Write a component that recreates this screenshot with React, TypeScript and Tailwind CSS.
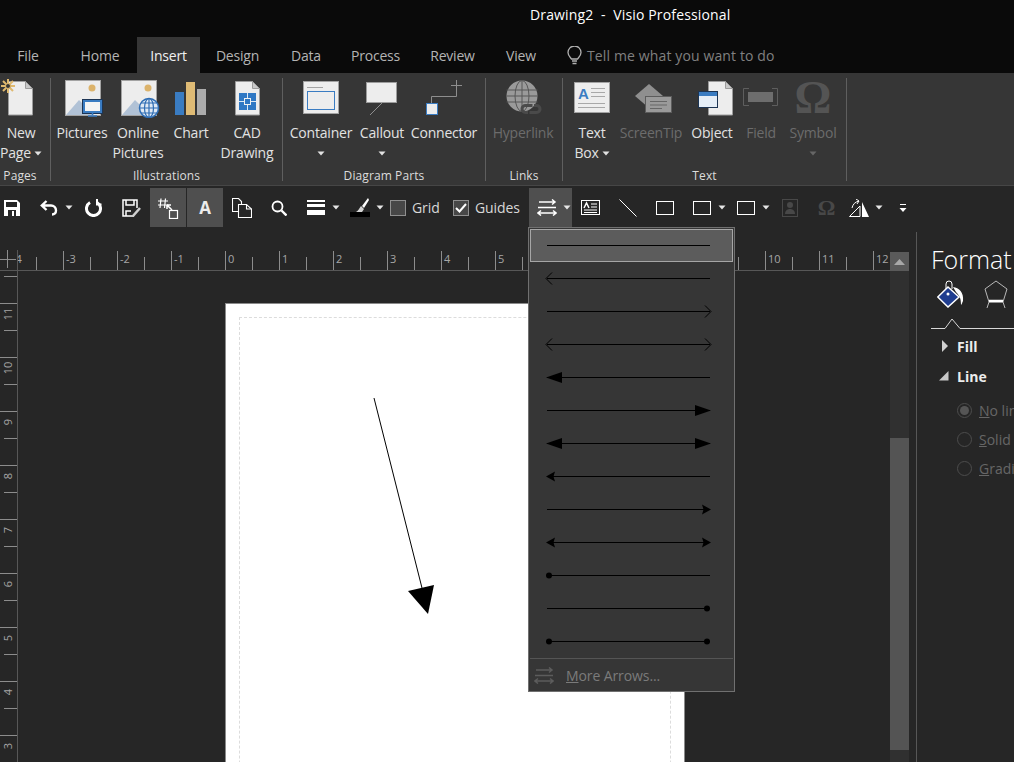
import type { ReactNode } from 'react';

const FONT = "font-['Open_Sans','Noto_Sans',sans-serif]";

function Caret({ color = '#e6e6e6', className = '' }: { color?: string; className?: string }) {
  return (
    <svg width="8" height="5" viewBox="0 0 8 5" className={`shrink-0 ${className}`}>
      <path d="M0.5 0.5h7L4 4.5z" fill={color} />
    </svg>
  );
}

function Frame({ children }: { children: ReactNode }) {
  return (
    <svg width="44" height="40" viewBox="0 0 44 40" className="block">
      {children}
    </svg>
  );
}

function Doc({ x, y = 3 }: { x: number; y?: number }) {
  return (
    <g>
      <path d={`M${x + 0.5} ${y + 0.5}h17l7 7v26.500h-24z`} fill="#ededed" stroke="#9c9c9c" />
      <path d={`M${x + 17.500} ${y + 0.5}v7h7z`} fill="#c9c9c9" stroke="#9c9c9c" />
    </g>
  );
}

function Landscape() {
  return (
    <g>
      <rect x="5.500" y="2.500" width="35" height="35" fill="#ededed" stroke="#a3a3a3" />
      <circle cx="32" cy="10" r="3.500" fill="#dcb36b" />
      <path d="M6 37l13-15 15 15z" fill="#b1c2d6" />
    </g>
  );
}

function NewPageIcon() {
  return (
    <Frame>
      <Doc x={9} />
      <g stroke="#dfb96f" strokeWidth="2">
        <path d="M2 8h14M9 1v14M4 3l10 10M14 3L4 13" />
      </g>
      <circle cx="9" cy="8" r="2.500" fill="#363636" stroke="#dfb96f" />
    </Frame>
  );
}

function PicturesIcon() {
  return (
    <Frame>
      <Landscape />
      <rect x="22" y="21" width="21" height="15" fill="#1d3554" />
      <rect x="23" y="22" width="19" height="13" fill="#3a7cc2" />
      <rect x="25" y="24" width="15" height="9" fill="#f4f4f4" />
      <path d="M32.500 35v2M28 38h9" stroke="#3a7cc2" strokeWidth="1.500" />
    </Frame>
  );
}

function OnlinePicturesIcon() {
  return (
    <Frame>
      <Landscape />
      <circle cx="33" cy="30" r="9.500" fill="#dfe9f4" stroke="#2e6db4" strokeWidth="1.500" />
      <path d="M24 30h18M25.500 25h15M25.500 35h15M33 20.500v19" stroke="#2e6db4" strokeWidth="1.200" />
      <ellipse cx="33" cy="30" rx="4.500" ry="9.500" fill="none" stroke="#2e6db4" strokeWidth="1.200" />
    </Frame>
  );
}

function ChartIcon() {
  return (
    <Frame>
      <rect x="6" y="14" width="9" height="23" fill="#3a7cc2" />
      <rect x="17" y="4" width="9" height="33" fill="#dfbb75" />
      <rect x="28" y="11" width="9" height="26" fill="#acacac" />
    </Frame>
  );
}

function CadIcon() {
  return (
    <Frame>
      <Doc x={10} />
      <rect x="14" y="15" width="17" height="17" fill="#2f78c4" />
      <path d="M22.500 15v17M14 23.500h17" stroke="#dce8f5" />
      <rect x="19.500" y="20.500" width="6" height="6" fill="#2f78c4" stroke="#f0f0f0" />
    </Frame>
  );
}

function ContainerIcon() {
  return (
    <Frame>
      <rect x="4.500" y="3.500" width="35" height="32" fill="#ededed" stroke="#a3a3a3" />
      <path d="M8 9.500h16" stroke="#a3a3a3" />
      <rect x="8.500" y="13.500" width="27" height="18" fill="none" stroke="#3a7cc2" />
    </Frame>
  );
}

function CalloutIcon() {
  return (
    <Frame>
      <rect x="6.500" y="4.500" width="30" height="20" fill="#ededed" stroke="#9c9c9c" />
      <path d="M22 25L10 37" stroke="#8e8e8e" />
    </Frame>
  );
}

function ConnectorIcon() {
  return (
    <svg width="44" height="40" viewBox="0 0 44 40" className="block">
      <path d="M9.500 25v-6.500h25v-11" stroke="#8e8e8e" fill="none" />
      <path d="M29 7.500h11M34.500 2v11" stroke="#8e8e8e" fill="none" />
      <rect x="4.500" y="25.500" width="11" height="11" fill="#ededed" stroke="#3a7cc2" />
    </svg>
  );
}

function HyperlinkIcon() {
  return (
    <Frame>
      <circle cx="21" cy="18" r="15.500" fill="#9a9a9a" />
      <path d="M5.500 12h31M5.500 24h31M5.500 18h31M21 2.500v31" stroke="#565656" />
      <ellipse cx="21" cy="18" rx="7" ry="15.500" fill="none" stroke="#565656" />
      <path d="M27 34.500h-2.500a3 3 0 0 1 0-7h7M33 27.500h2.500a3 3 0 0 1 0 7h-7" fill="none" stroke="#4a4a4a" strokeWidth="3" />
    </Frame>
  );
}

function TextBoxIcon() {
  return (
    <Frame>
      <rect x="4.500" y="4.500" width="35" height="30" fill="#ededed" stroke="#a3a3a3" />
      <text x="8" y="21" fontSize="15" fontWeight="700" fill="#3a7cc2" fontFamily="'Liberation Sans',sans-serif">A</text>
      <path d="M21 10.500h14M21 14.500h14M21 18.500h14M8 25.500h27M8 29.500h27" stroke="#a8a8a8" />
    </Frame>
  );
}

function ScreenTipIcon() {
  return (
    <Frame>
      <path d="M20 6l14 12-14 12L6 18z" fill="#8f8f8f" />
      <rect x="16.500" y="18.500" width="26" height="16" fill="#9a9a9a" stroke="#5c5c5c" />
      <path d="M21 23.500h17M21 27h17M21 30.500h12" stroke="#666666" />
    </Frame>
  );
}

function ObjectIcon() {
  return (
    <Frame>
      <Doc x={18} />
      <rect x="8.500" y="13.500" width="19" height="16" fill="#e6eef7" stroke="#1d3554" />
      <rect x="9" y="14" width="18" height="4" fill="#3a7cc2" />
    </Frame>
  );
}

function FieldIcon() {
  return (
    <Frame>
      <path d="M10 10.500h-5.500v17H10M33 10.500h5.500v17H33" fill="none" stroke="#5e5e5e" />
      <rect x="9" y="14" width="25" height="10" fill="#6d6d6d" />
    </Frame>
  );
}

function Omega({ size, color }: { size: number; color: string }) {
  return (
    <span
      className="font-['Liberation_Serif',serif] font-bold leading-none"
      style={{ fontSize: size, color }}
    >
      Ω
    </span>
  );
}

type RibbonItem = {
  width: string;
  icon: ReactNode;
  lines: string[];
  caret?: 'inline' | 'below';
  disabled?: boolean;
};

function RibbonButton({ item }: { item: RibbonItem }) {
  const color = item.disabled ? 'text-[#6c6c6c]' : 'text-[#e2e2e2]';
  const caretColor = item.disabled ? '#666666' : '#e2e2e2';
  return (
    <div className={`flex flex-col items-center ${item.width}`}>
      <div className="flex h-[40px] items-center justify-center">{item.icon}</div>
      <div className={`mt-[5px] flex flex-col items-center text-[14px] leading-[20px] tracking-[-0.2px] whitespace-nowrap ${color}`}>
        {item.lines.map((line, i) => (
          <div key={line} className="flex items-center gap-[3px]">
            {line}
            {item.caret === 'inline' && i === item.lines.length - 1 && <Caret color={caretColor} />}
          </div>
        ))}
        {item.caret === 'below' && (
          <div className="flex h-[20px] items-center">
            <Caret color={caretColor} />
          </div>
        )}
      </div>
    </div>
  );
}

function RibbonGroup({ width, pad, label, items, center }: {
  width: string;
  pad: string;
  label: string;
  items: RibbonItem[];
  center?: string;
}) {
  return (
    <div className={`flex h-full shrink-0 flex-col ${width}`}>
      <div className="mt-[5px] mb-[4px] flex flex-1 flex-col border-r border-[#5f5f5f]">
        <div className={`flex flex-1 ${pad}`}>
          {items.map((item) => (
            <RibbonButton key={item.lines.join(' ')} item={item} />
          ))}
        </div>
        <div className={`-mb-[3px] text-center text-[12px] leading-[16px] tracking-[0.1px] text-[#dcdcdc] ${center ?? ''}`}>
          {label}
        </div>
      </div>
    </div>
  );
}

function Ribbon() {
  return (
    <div className="flex h-[112px] bg-[#363636]">
      <RibbonGroup
        width="w-[51px]"
        pad="pl-0"
        label="Pages"
        center="pr-[10px]"
        items={[{ width: 'w-[42px]', icon: <NewPageIcon />, lines: ['New', 'Page'], caret: 'inline' }]}
      />
      <RibbonGroup
        width="w-[232px]"
        pad="pl-[3px]"
        label="Illustrations"
        items={[
          { width: 'w-[56px]', icon: <PicturesIcon />, lines: ['Pictures'] },
          { width: 'w-[56px]', icon: <OnlinePicturesIcon />, lines: ['Online', 'Pictures'] },
          { width: 'w-[50px]', icon: <ChartIcon />, lines: ['Chart'] },
          { width: 'w-[62px]', icon: <CadIcon />, lines: ['CAD', 'Drawing'] },
        ]}
      />
      <RibbonGroup
        width="w-[203px]"
        pad="pl-[5px]"
        label="Diagram Parts"
        items={[
          { width: 'w-[66px]', icon: <ContainerIcon />, lines: ['Container'], caret: 'below' },
          { width: 'w-[56px]', icon: <CalloutIcon />, lines: ['Callout'], caret: 'below' },
          { width: 'w-[68px]', icon: <ConnectorIcon />, lines: ['Connector'] },
        ]}
      />
      <RibbonGroup
        width="w-[77px]"
        pad="pl-[2px]"
        label="Links"
        items={[{ width: 'w-[70px]', icon: <HyperlinkIcon />, lines: ['Hyperlink'], disabled: true }]}
      />
      <RibbonGroup
        width="w-[284px]"
        pad="pl-[3px]"
        label="Text"
        items={[
          { width: 'w-[52px]', icon: <TextBoxIcon />, lines: ['Text', 'Box'], caret: 'inline' },
          { width: 'w-[66px]', icon: <ScreenTipIcon />, lines: ['ScreenTip'], disabled: true },
          { width: 'w-[56px]', icon: <ObjectIcon />, lines: ['Object'] },
          { width: 'w-[42px]', icon: <FieldIcon />, lines: ['Field'], disabled: true },
          { width: 'w-[62px]', icon: <Omega size={46} color="#545454" />, lines: ['Symbol'], caret: 'below', disabled: true },
        ]}
      />
    </div>
  );
}

function TitleBar() {
  const tabs = [
    { label: 'File', cls: 'w-[56px]' },
    { label: 'Home', cls: 'w-[81px] pl-[7px]' },
    { label: 'Insert', cls: 'w-[63px] bg-[#363636] text-[#f0f0f0]' },
    { label: 'Design', cls: 'w-[75px]' },
    { label: 'Data', cls: 'w-[62px]' },
    { label: 'Process', cls: 'w-[77px]' },
    { label: 'Review', cls: 'w-[77px]' },
    { label: 'View', cls: 'w-[60px]' },
  ];
  return (
    <div className="h-[73px] bg-[#0a0a0a]">
      <div className="h-[37px] pl-[530px] pt-[4px] text-[14px] leading-[22px] tracking-[0.15px] whitespace-pre text-white">
        Drawing2  -  Visio Professional
      </div>
      <div className="flex h-[36px] items-stretch text-[14px] tracking-[-0.2px] text-[#b4b4b4]">
        {tabs.map((tab) => (
          <div key={tab.label} className={`flex shrink-0 items-center justify-center ${tab.cls}`}>
            {tab.label}
          </div>
        ))}
        <div className="ml-[16px] flex items-center gap-[5px] tracking-[0.13px] text-[#808080]">
          <svg width="15" height="19" viewBox="0 0 15 19" fill="none" stroke="#b0b0b0" strokeWidth="1.300">
            <path d="M4.500 13C3 11 1 9.500 1 6.500a6.500 6.500 0 0 1 13 0C14 9.500 12 11 10.500 13z" />
            <path d="M5 15h5M5.500 17.500h4" strokeWidth="1.600" />
          </svg>
          <span className="whitespace-nowrap">Tell me what you want to do</span>
        </div>
      </div>
    </div>
  );
}

function SwapIcon({ color = 'white', width = 20, height = 17 }: { color?: string; width?: number; height?: number }) {
  return (
    <svg width={width} height={height} viewBox="0 0 20 17" fill="none" stroke={color} strokeWidth="1.500" className="shrink-0">
      <path d="M2 3h16M15 .5L18 3l-3 2.500M1 8.500h18M1 14h18M4 11.500L1 14l3 2.500M16 11.500l3 2.500-3 2.500" />
    </svg>
  );
}

function Toolbar() {
  return (
    <div className="h-[47px] border-t border-[#464646] bg-[#262626] pt-[2px] text-[14px] tracking-[-0.1px] text-[#d8d8d8]">
      <div className="flex h-[39px] w-full items-center">
        <svg width="16" height="16" viewBox="0 0 16 16" className="ml-[4px] shrink-0">
          <path d="M0 0h13l3 3v13H0z" fill="white" />
          <rect x="2" y="2" width="11" height="5" fill="#262626" />
          <rect x="4" y="10" width="8" height="6" fill="#262626" />
          <rect x="8" y="11" width="2" height="5" fill="white" />
        </svg>
        <svg width="18" height="16" viewBox="0 0 18 16" fill="none" stroke="white" strokeWidth="2.400" className="ml-[20px] shrink-0">
          <path d="M6.500 1L1.800 5.500l4.700 4.500M2 5.500h9a5 5 0 0 1 5 5c0 2.500-1.500 4-4 4" />
        </svg>
        <Caret className="ml-[7px]" />
        <svg width="17" height="18" viewBox="0 0 17 18" fill="none" stroke="white" strokeWidth="3" className="ml-[12px] shrink-0">
          <path d="M5 3.500A7 7 0 1 0 12 3.500" />
          <path d="M12 0v5.500h4.500" strokeWidth="2" />
        </svg>
        <svg width="19" height="18" viewBox="0 0 19 18" fill="none" stroke="white" strokeWidth="1.500" className="ml-[20px] shrink-0">
          <path d="M12 17H1V1h14v8" />
          <path d="M4 1v5h8V1" />
          <path d="M4 17v-5h5" />
          <path d="M11 17l7-8" strokeWidth="2.500" stroke="#cfcfcf" />
        </svg>
        <div className="ml-[9px] flex h-[39px] w-[36px] shrink-0 items-center justify-center bg-[#4f4f4f]">
          <svg width="21" height="22" viewBox="0 0 21 22" fill="none" stroke="white" strokeWidth="1.200">
            <path d="M3 1.500L2 11M7.500 1.500L6.500 11M0 4h10M0 8h10" />
            <path d="M9 8l5 5M9 8h4M9 8v4" strokeWidth="1.500" />
            <rect x="11.500" y="13.500" width="8" height="8" />
          </svg>
        </div>
        <div className="ml-[1px] flex h-[39px] w-[36px] shrink-0 items-center justify-center bg-[#4f4f4f] text-[17px] font-bold text-[#ececec]">
          A
        </div>
        <svg width="20" height="20" viewBox="0 0 20 20" fill="none" stroke="white" strokeWidth="1.100" className="ml-[9px] shrink-0">
          <path d="M6 13.500H.5V.5h6l3 3v3" />
          <path d="M6.500 6.500h8l5 4.500v8.500h-13z" />
          <path d="M14.500 6.500v4.500h5" />
        </svg>
        <svg width="16" height="16" viewBox="0 0 16 16" fill="none" stroke="white" strokeWidth="1.800" className="ml-[19px] shrink-0">
          <circle cx="6.500" cy="6.500" r="5" />
          <path d="M10.500 10.500L15.500 15.500" strokeWidth="2.400" />
        </svg>
        <svg width="18" height="16" viewBox="0 0 18 16" className="ml-[20px] shrink-0">
          <rect y="0" width="18" height="2" fill="white" />
          <rect y="4" width="18" height="3" fill="white" />
          <rect y="10" width="18" height="5" fill="white" />
        </svg>
        <Caret className="ml-[7px]" />
        <svg width="20" height="19" viewBox="0 0 20 19" className="ml-[10px] shrink-0">
          <path d="M18 0L12 8l2 2 5-8z" fill="white" />
          <path d="M11 8l3 3-2 3H6c2-1 3-3 5-6z" fill="#d4d4d4" />
          <rect y="14" width="20" height="5" fill="black" />
        </svg>
        <Caret className="ml-[6px]" />
        <div className="ml-[6px] h-[16px] w-[16px] shrink-0 border border-[#8f8f8f] bg-[#474747]" />
        <span className="ml-[6px] w-[28px] shrink-0">Grid</span>
        <div className="ml-[13px] flex h-[16px] w-[16px] shrink-0 items-center justify-center border border-[#8f8f8f] bg-[#474747]">
          <svg width="12" height="10" viewBox="0 0 12 10" fill="none" stroke="white" strokeWidth="2">
            <path d="M1 5l3.500 3.500L11 1" />
          </svg>
        </div>
        <span className="ml-[6px] w-[45px] shrink-0">Guides</span>
        <div className="ml-[9px] flex h-[39px] w-[43px] shrink-0 items-center bg-[#4f4f4f] pl-[8px]">
          <SwapIcon />
          <Caret className="ml-[6px]" />
        </div>
        <svg width="19" height="15" viewBox="0 0 19 15" fill="none" stroke="white" className="ml-[9px] shrink-0">
          <rect x=".5" y=".5" width="18" height="14" />
          <path d="M10 4h6M10 7h6M3 10h13M3 12.500h13" />
          <path d="M3 8l2.500-5L8 8" strokeWidth="1.500" />
        </svg>
        <svg width="18" height="18" viewBox="0 0 18 18" stroke="white" className="ml-[19px] shrink-0">
          <path d="M.5.5l17 17" />
        </svg>
        <div className="ml-[19px] h-[14px] w-[18px] shrink-0 border border-white" />
        <div className="ml-[19px] h-[14px] w-[18px] shrink-0 border border-white" />
        <Caret className="ml-[7px]" />
        <div className="ml-[11px] h-[14px] w-[18px] shrink-0 border border-white" />
        <Caret className="ml-[7px]" />
        <svg width="16" height="18" viewBox="0 0 16 18" className="ml-[12px] shrink-0">
          <rect x=".5" y=".5" width="15" height="17" fill="none" stroke="#484848" />
          <circle cx="8" cy="6" r="3" fill="#484848" />
          <path d="M3 15c0-4 3-5 5-5s5 1 5 5z" fill="#484848" />
        </svg>
        <div className="ml-[20px] flex w-[17px] shrink-0 justify-center">
          <Omega size={22} color="#484848" />
        </div>
        <svg width="20" height="18" viewBox="0 0 20 18" className="ml-[14px] shrink-0">
          <path d="M.5 17.500L11 7v10.500z" fill="none" stroke="white" />
          <path d="M13 3l7 15h-7z" fill="white" />
          <path d="M3 9c1-4 3-6 7-7M7 0l3 2-2 3" fill="none" stroke="white" />
        </svg>
        <Caret className="ml-[6px]" />
        <svg width="8" height="10" viewBox="0 0 8 10" className="ml-[16px] shrink-0">
          <path d="M1 1.500h6" stroke="white" />
          <path d="M0.500 5h7L4 9z" fill="white" />
        </svg>
      </div>
    </div>
  );
}

function HorizontalRuler() {
  const marks = Array.from({ length: 17 }, (_, i) => i - 4);
  return (
    <div className="flex h-[39px] w-[890px] items-end border-b border-[#575757]">
      <div className="relative h-[20px] w-[18px] shrink-0 border-r border-[#575757]">
        <div className="absolute top-[9px] left-0 h-px w-[16px] bg-[#8c8c8c]" />
        <div className="absolute top-0 left-[7px] h-[18px] w-px bg-[#8c8c8c]" />
      </div>
      <div className="w-[872px] overflow-hidden">
        <div className="-ml-[9px] flex h-[19px] w-max items-end text-[11px] leading-[16px] text-[#a6a6a6]">
          {marks.map((n) => (
            <div key={n} className="flex h-full w-[54px] shrink-0 items-end">
              <div className="h-full w-[27px] border-l border-[#8c8c8c] pl-[2px]">
                {n}
              </div>
              <div className="h-[13px] w-[27px] border-l border-[#8c8c8c]" />
            </div>
          ))}
        </div>
      </div>
    </div>
  );
}

function VerticalRuler() {
  const marks = Array.from({ length: 11 }, (_, i) => 12 - i);
  return (
    <div className="h-full w-[18px] shrink-0 overflow-hidden border-r border-[#575757]">
      <div className="-mt-[22px] text-[11px] leading-[11px] text-[#a6a6a6]">
        {marks.map((n) => (
          <div key={n} className="h-[54px]">
            <div className="flex h-[27px] items-start justify-start border-t border-[#8c8c8c] pt-[3px] pl-[2px]">
              <span className="flex h-[14px] w-[10px] items-center justify-center -rotate-90">{n}</span>
            </div>
            <div className="ml-[4px] h-[27px] border-t border-[#8c8c8c]" />
          </div>
        ))}
      </div>
    </div>
  );
}

function Canvas() {
  return (
    <div className="flex-1 overflow-hidden bg-[#262626] pt-[32px] pl-[207px]">
      <div className="relative h-[620px] w-[460px] border-t border-l border-r border-[#8a8a8a] bg-white px-[13px] pt-[13px]">
        <div className="h-full border border-dashed border-[#dcdcdc]" />
        <svg width="460" height="460" viewBox="0 0 460 460" className="absolute top-0 left-0">
          <path d="M148 94L196 284" stroke="black" />
          <path d="M202 310L182 287L208 281z" fill="black" />
        </svg>
      </div>
    </div>
  );
}

function Scrollbar() {
  return (
    <div className="mt-[20px] flex w-[19px] shrink-0 flex-col">
      <div className="flex h-[19px] shrink-0 items-center justify-center bg-[#5a5a5a]">
        <svg width="11" height="6" viewBox="0 0 11 6">
          <path d="M0 6L5.500 0 11 6z" fill="#a8a8a8" />
        </svg>
      </div>
      <div className="h-[167px] shrink-0 bg-[#303030]" />
      <div className="h-[312px] shrink-0 bg-[#545454]" />
      <div className="flex-1 bg-[#303030]" />
    </div>
  );
}

type Marker = 'none' | 'open' | 'big' | 'notch' | 'dot';

function lineMarker(kind: Marker, side: 'l' | 'r') {
  // drawn pointing left, then mirrored around the row's centre for the right end
  const flip = side === 'r' ? 'matrix(-1 0 0 1 197 0)' : undefined;
  if (kind === 'open') {
    return <path transform={flip} d="M22 10.500L16 16.500l6 6" fill="none" stroke="black" />;
  }
  if (kind === 'big') {
    return <path transform={flip} d="M16 16.500L32 11v11z" fill="black" />;
  }
  if (kind === 'notch') {
    return <path transform={flip} d="M16 16.500L25 11.500 23.500 16.500 25 21.500z" fill="black" />;
  }
  if (kind === 'dot') {
    return <circle cx={side === 'l' ? 19 : 177} cy="16.500" r="3" fill="black" />;
  }
  return null;
}

function ArrowDropdown() {
  const rows: [Marker, Marker][] = [
    ['none', 'none'],
    ['open', 'none'],
    ['none', 'open'],
    ['open', 'open'],
    ['big', 'none'],
    ['none', 'big'],
    ['big', 'big'],
    ['notch', 'none'],
    ['none', 'notch'],
    ['notch', 'notch'],
    ['dot', 'none'],
    ['none', 'dot'],
    ['dot', 'dot'],
  ];
  return (
    <div className="absolute top-[227px] left-[528px] w-[207px] border border-[#707070] bg-[#363636] p-px">
      {rows.map(([l, r], i) => (
        <div key={`${l}-${r}-${i}`} className={`h-[33px] ${i === 0 ? 'bg-[#5c5c5c] outline outline-[#a6a6a6] -outline-offset-1' : ''}`}>
          <svg width="203" height="33" viewBox="0 0 203 33" className="block">
            <path d="M17 16.500h163" stroke="black" />
            {lineMarker(l, 'l')}
            {lineMarker(r, 'r')}
          </svg>
        </div>
      ))}
      <div className="flex h-[32px] items-center border-t border-[#555555] pt-[1px] pl-[4px] text-[14px] tracking-[-0.1px] text-[#7b7b7b]">
        <SwapIcon color="#5c5c5c" />
        <span className="ml-[12px]"><span className="underline">M</span>ore Arrows...</span>
      </div>
    </div>
  );
}

function Radio({ label, accel, checked }: { label: string; accel: string; checked?: boolean }) {
  return (
    <div className="flex h-[29px] items-center">
      <div className="flex h-[15px] w-[15px] shrink-0 items-center justify-center rounded-full border border-[#4c4c4c]">
        {checked && <div className="h-[9px] w-[9px] rounded-full bg-[#555555]" />}
      </div>
      <span className="ml-[7px] whitespace-nowrap text-[#666666]">
        <span className="underline">{accel}</span>
        {label}
      </span>
    </div>
  );
}

function FormatPanel() {
  return (
    <div className="ml-[7px] w-[98px] shrink-0 overflow-hidden border-l border-[#575757] pl-[14px] text-[14px]">
      <div className="mt-[8px] text-[25px] leading-[38px] font-light whitespace-nowrap text-white">Format Shape</div>
      <div className="flex h-[30px] items-end pl-[6px]">
        <svg width="28" height="29" viewBox="0 0 28 29" className="shrink-0">
          <path d="M9 15V5a3 3 0 0 1 6 0v5" fill="none" stroke="white" />
          <path d="M11 8L22 18 11 28 .8 18z" fill="#1f3d8f" stroke="white" strokeWidth="1.500" />
          <circle cx="11" cy="15" r="1.500" fill="white" />
          <path d="M16 8c6 1 11 5 10 14-1 2-1 3-2 4 0-6-1-9-5-13z" fill="white" />
        </svg>
        <svg width="24" height="28" viewBox="0 0 24 28" className="ml-[19px] shrink-0" fill="none" stroke="#b8b8b8">
          <path d="M12 1l11 8-4 13H5L1 9z" />
          <path d="M5 21h14" stroke="white" strokeWidth="2.500" />
          <path d="M5 22l-2 6M19 22l2 6" />
        </svg>
      </div>
      <svg width="90" height="12" viewBox="0 0 90 12" className="mt-[10px] block" fill="none" stroke="#d8d8d8">
        <path d="M0 10.500h14L21 1l8 9.500h61" />
      </svg>
      <div className="mt-[6px] flex h-[20px] items-center font-bold text-[#ececec]">
        <svg width="8" height="12" viewBox="0 0 8 12" className="ml-[10px]">
          <path d="M1 0l6 6-6 6z" fill="#d0d0d0" />
        </svg>
        <span className="ml-[8px]">Fill</span>
      </div>
      <div className="mt-[10px] flex h-[20px] items-center font-bold text-[#ececec]">
        <svg width="10" height="10" viewBox="0 0 10 10" className="ml-[8px]">
          <path d="M9.500 0v9.500H0z" fill="#c8c8c8" />
        </svg>
        <span className="ml-[8px]">Line</span>
      </div>
      <div className="mt-[10px] pl-[26px]">
        <Radio accel="N" label="o line" checked />
        <Radio accel="S" label="olid line" />
        <Radio accel="G" label="radient line" />
      </div>
    </div>
  );
}

export default function App() {
  return (
    <div className={`relative h-[762px] w-[1014px] overflow-hidden bg-[#262626] ${FONT}`}>
      <TitleBar />
      <Ribbon />
      <Toolbar />
      <div className="flex h-[530px]">
        <div className="flex w-[890px] shrink-0 flex-col">
          <HorizontalRuler />
          <div className="flex min-h-0 flex-1">
            <VerticalRuler />
            <Canvas />
          </div>
        </div>
        <Scrollbar />
        <FormatPanel />
      </div>
      <ArrowDropdown />
    </div>
  );
}
